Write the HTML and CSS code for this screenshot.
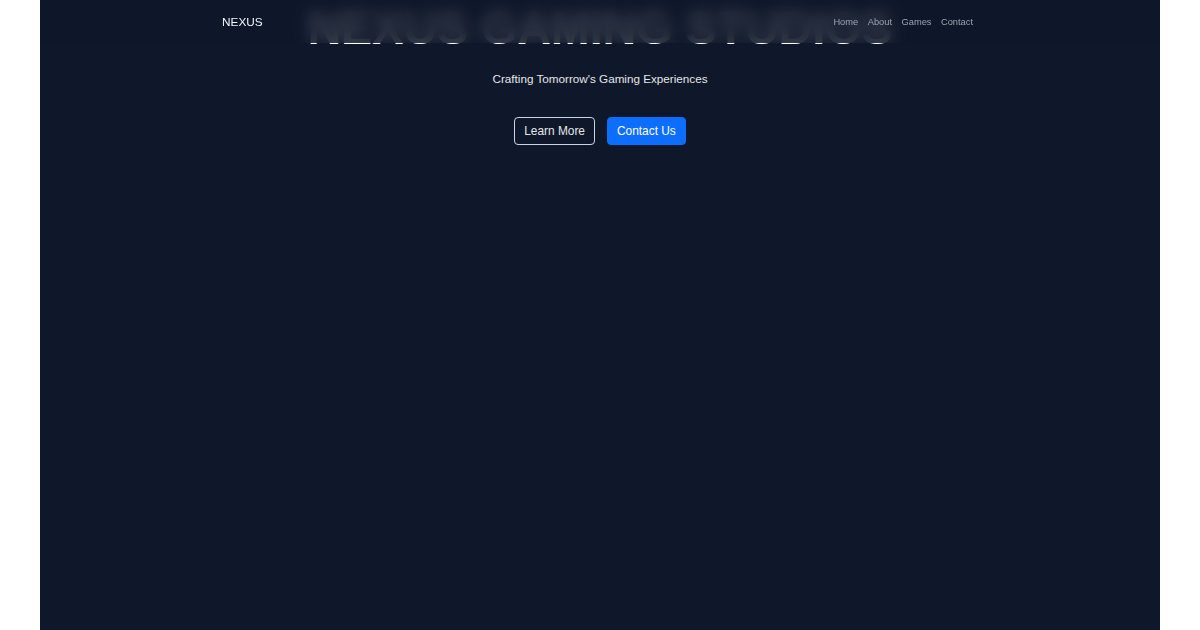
FILE: index.html
```html
<!DOCTYPE html>
<html lang="en">
<head>
<meta charset="utf-8">
<title>Nexus Gaming Studios</title>
<link rel="stylesheet" href="styles.css">
</head>
<body>
<div class="page">
  <header class="topbar">
    <div class="topbar-inner">
      <a class="brand" href="#">NEXUS</a>
      <nav class="nav">
        <a href="#">Home</a>
        <a href="#">About</a>
        <a href="#">Games</a>
        <a href="#">Contact</a>
      </nav>
    </div>
  </header>
  <main class="hero">
    <h1 class="hero-title">NEXUS GAMING STUDIOS</h1>
    <p class="hero-sub">Crafting Tomorrow's Gaming Experiences</p>
    <div class="hero-actions">
      <a class="btn btn-outline" href="#">Learn More</a>
      <a class="btn btn-primary" href="#">Contact Us</a>
    </div>
  </main>
</div>
</body>
</html>
```

FILE: styles.css
```css
html, body {
  margin: 0;
  padding: 0;
  height: 100%;
  background: #ffffff;
}
body {
  font-family: "Liberation Sans", Arial, sans-serif;
}
.page {
  position: relative;
  width: 1120px;
  min-height: 100%;
  margin: 0 auto;
  background: #0f172a;
  overflow: hidden;
}
.topbar {
  position: absolute;
  top: 0;
  left: 0;
  right: 0;
  height: 43px;
  background: rgba(15, 23, 42, 0.82);
  backdrop-filter: blur(8px);
  -webkit-backdrop-filter: blur(8px);
  z-index: 10;
}
.topbar-inner {
  display: flex;
  align-items: center;
  justify-content: space-between;
  height: 100%;
  padding: 0 187px 0 182px;
}
.brand {
  color: #f1f5f9;
  font-size: 11.8px;
  text-decoration: none;
}
.nav {
  display: flex;
  gap: 9.5px;
}
.nav a {
  color: #9ca3af;
  font-size: 9.3px;
  text-decoration: none;
}
.hero {
  display: flex;
  flex-direction: column;
  align-items: center;
  padding-top: 5px;
}
.hero-title {
  margin: 0;
  font-size: 46.6px;
  line-height: 1;
  font-weight: 700;
  color: #ffffff;
}
.hero-sub {
  margin: 19.5px 0 0;
  font-size: 11.7px;
  line-height: 16px;
  color: #e5e7eb;
}
.hero-actions {
  display: flex;
  gap: 12px;
  margin-top: 30px;
}
.btn {
  display: flex;
  align-items: center;
  justify-content: center;
  height: 28px;
  box-sizing: border-box;
  padding: 0 9px;
  font-size: 11.9px;
  border-radius: 4px;
  text-decoration: none;
}
.btn-outline {
  border: 1px solid #cbd5e1;
  color: #e5e7eb;
  background: transparent;
}
.btn-primary {
  border: 1px solid #0d6efd;
  background: #0d6efd;
  color: #ffffff;
}
```
